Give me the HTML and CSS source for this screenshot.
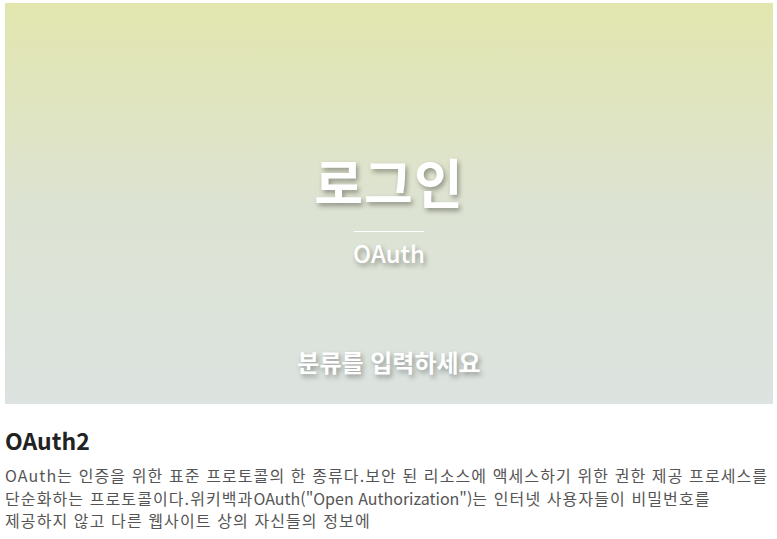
FILE: index.html
```html
<!DOCTYPE html>
<html lang="ko">
<head>
<meta charset="utf-8">
<link rel="stylesheet" href="styles.css">
</head>
<body>
<div class="page">
  <header class="hero">
    <div class="hero-main">
      <h1 class="hero-title">로그인</h1>
      <hr class="hero-rule">
      <p class="hero-sub">OAuth</p>
    </div>
    <p class="hero-cat">분류를 입력하세요</p>
  </header>
  <section class="post">
    <h2 class="post-title">OAuth2</h2>
    <p class="post-text">OAuth는 인증을 위한 표준 프로토콜의 한 종류다.보안 된 리소스에 액세스하기 위한 권한 제공 프로세스를 단순화하는 프로토콜이다.위키백과<span class="latin">OAuth("Open Authorization")</span>는 인터넷 사용자들이 비밀번호를 제공하지 않고 다른 웹사이트 상의 자신들의 정보에</p>
  </section>
</div>
</body>
</html>
```

FILE: styles.css
```css
* { box-sizing: border-box; }
html, body { margin: 0; padding: 0; background: #fff; }
body { font-family: "Noto Sans CJK KR", "Noto Sans", sans-serif; }
.page { padding: 3px 4px 0 5px; }
.hero {
  height: 401px;
  background: linear-gradient(to bottom, #e2e6ae 0%, #dde3d2 50%, #dce3e0 100%);
  display: flex;
  flex-direction: column;
  align-items: center;
  color: #fff;
  text-shadow: 2px 3px 5px rgba(0,0,0,0.35);
}
.hero-main {
  margin-top: 143px;
  display: flex;
  flex-direction: column;
  align-items: center;
}
.hero-title {
  margin: 0;
  font-size: 53px;
  font-weight: 700;
  line-height: 70px;
  letter-spacing: 1px;
}
.hero-rule {
  width: 70px;
  border: 0;
  border-top: 1px solid #fff;
  margin: 15px 0 0;
}
.hero-sub {
  margin: 5px 0 0;
  font-size: 24px;
  font-weight: 500;
  line-height: 32px;
}
.hero-cat {
  margin: 77px 0 0;
  font-size: 24px;
  font-weight: 700;
  line-height: 32px;
}
.post { padding-top: 19px; }
.post-title {
  margin: 0;
  font-size: 23px;
  font-weight: 700;
  line-height: 34px;
  color: #222;
}
.post-text {
  margin: 7px 0 0;
  font-size: 16px;
  line-height: 22.5px;
  letter-spacing: 1.1px;
  word-break: keep-all;
  color: #555;
}
.latin { letter-spacing: 0; }
```
